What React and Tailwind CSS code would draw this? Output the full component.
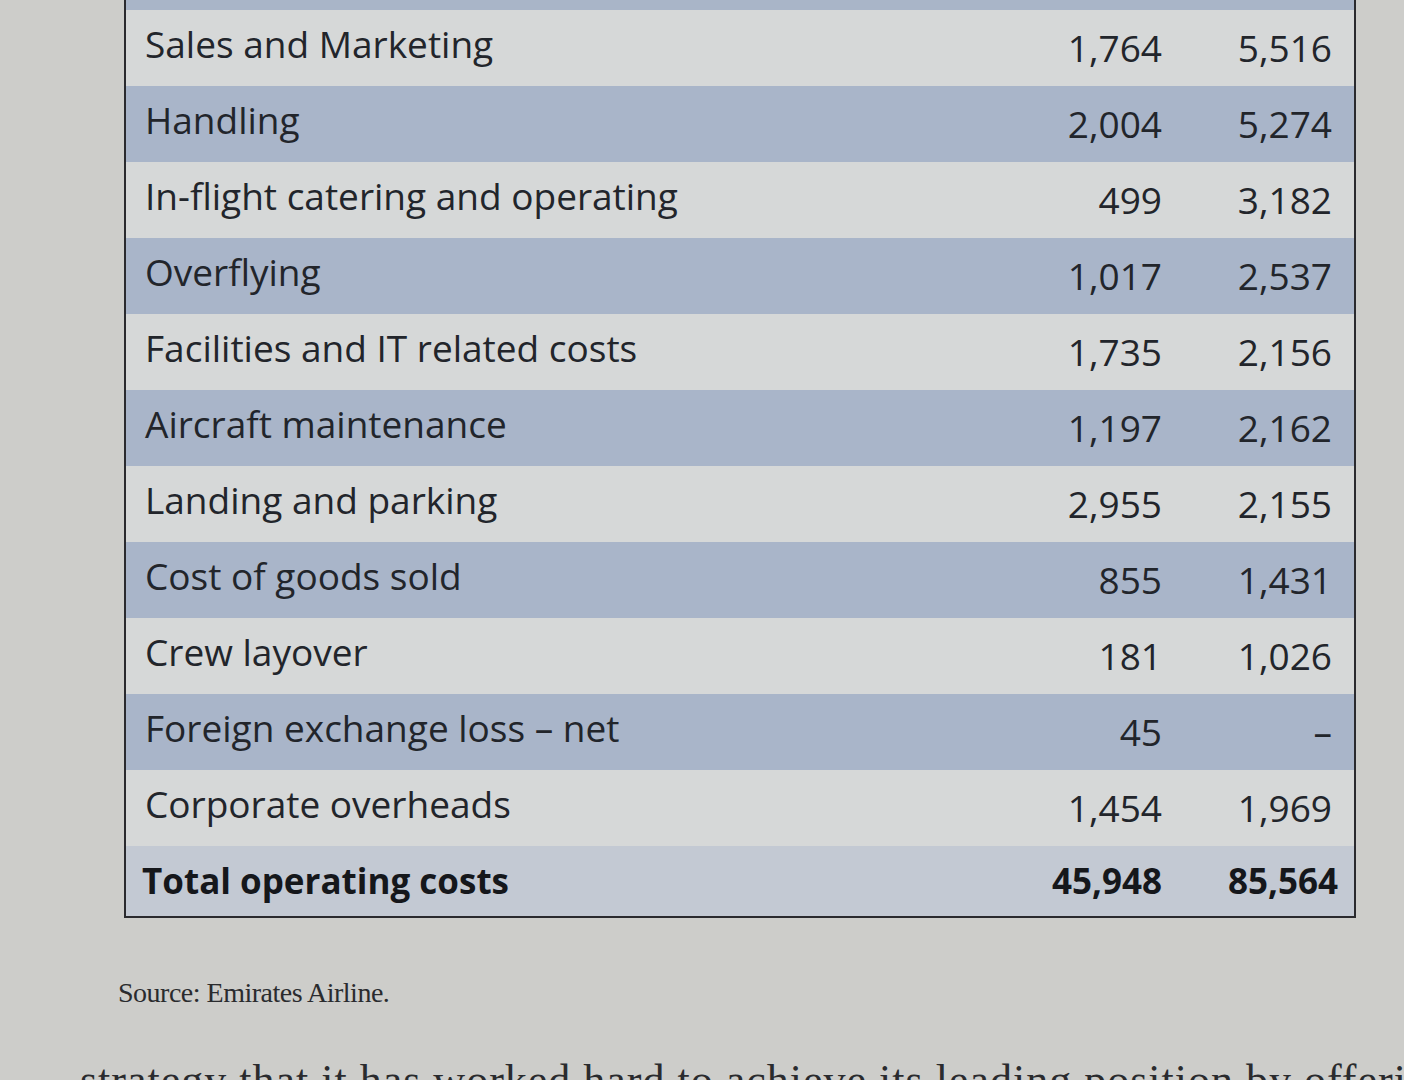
import React from 'react';

const rows = [
  ['Sales and Marketing', '1,764', '5,516'],
  ['Handling', '2,004', '5,274'],
  ['In-flight catering and operating', '499', '3,182'],
  ['Overflying', '1,017', '2,537'],
  ['Facilities and IT related costs', '1,735', '2,156'],
  ['Aircraft maintenance', '1,197', '2,162'],
  ['Landing and parking', '2,955', '2,155'],
  ['Cost of goods sold', '855', '1,431'],
  ['Crew layover', '181', '1,026'],
  ['Foreign exchange loss – net', '45', '–'],
  ['Corporate overheads', '1,454', '1,969'],
];

const App = () => {
  return (
    <div className="w-[1404px] h-[1080px] overflow-hidden bg-[#cdcdca]" style={{ fontFamily: '"Open Sans", Lato, sans-serif' }}>
      <div className="ml-[124px] w-[1232px] border-x-2 border-b-2 border-[#2a2a2e]">
        <div className="h-[10px] bg-[#a9b5c8]" />
        {rows.map((r, i) => (
          <div key={r[0]} className={`h-[76px] flex items-center text-[37px] text-[#22252b] ${i % 2 === 1 ? 'bg-[#a9b5c9]' : 'bg-[#d6d8d8]'}`}>
            <div className="flex-1 pl-[19px] pb-[8px]">{r[0]}</div>
            <div className="w-[200px] text-right">{r[1]}</div>
            <div className="w-[192px] pr-[22px] text-right">{r[2]}</div>
          </div>
        ))}
        <div className="h-[70px] flex items-center text-[35px] font-bold text-[#15171b] bg-[#c3c9d3]">
          <div className="flex-1 pl-[16px]">Total operating costs</div>
          <div className="w-[200px] text-right">45,948</div>
          <div className="w-[192px] pr-[16px] text-right">85,564</div>
        </div>
      </div>
      <div className="mt-[54px] ml-[118px] text-[28px] tracking-[-0.5px] text-[#2a2b2e]" style={{ fontFamily: '"Liberation Serif", serif' }}>
        Source: Emirates Airline.
      </div>
      <div className="mt-[34px] ml-[80px] whitespace-nowrap text-[44px] tracking-[1px] text-[#2a2b2e]" style={{ fontFamily: '"Liberation Serif", serif' }}>
        strategy that it has worked hard to achieve its leading position by offering
      </div>
    </div>
  );
};

export default App;
